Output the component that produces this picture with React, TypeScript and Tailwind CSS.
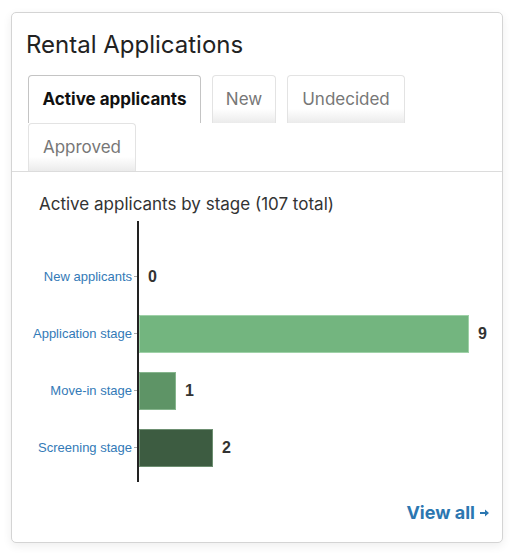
import React from "react";

type Stage = {
    label: string;
    value: number;
    barClass: string;
};

const stages: Stage[] = [
    {label: "New applicants", value: 0, barClass: "w-0"},
    {label: "Application stage", value: 9, barClass: "w-[330px] bg-[#73b57f] border-[#9fd1a8]"},
    {label: "Move-in stage", value: 1, barClass: "w-[37px] bg-[#5e9466] border-[#86b58d]"},
    {label: "Screening stage", value: 2, barClass: "w-[74px] bg-[#3d5c41] border-[#6d8f71]"},
];

const tabs = [
    {name: "Active applicants", active: true, width: "w-[173px]"},
    {name: "New", active: false, width: "w-[64px]"},
    {name: "Undecided", active: false, width: "w-[118px]"},
    {name: "Approved", active: false, width: "w-[108px]"},
];

const Tab: React.FC<{ name: string; active: boolean; width: string }> = ({name, active, width}) => {
    if (active) {
        return (
            <div className={`${width} h-[48px] flex items-center justify-center border border-b-0 border-[#c4c4c4] rounded-t-[4px] bg-white text-[17px] font-bold text-[#111]`}>
                {name}
            </div>
        );
    }
    return (
        <div className={`${width} h-[48px] flex items-center justify-center border border-b-0 border-[#e3e3e3] rounded-t-[4px] bg-gradient-to-b from-white from-[70%] to-[#ebebeb] text-[17px] text-[#777]`}>
            {name}
        </div>
    );
};

const App: React.FC = () => {
    return (
        <div className="min-h-screen bg-white pt-[12px] pl-[11px]" style={{fontFamily: "Inter, Lato, sans-serif"}}>
            <div className="w-[492px] h-[531px] border border-[#d4d4d4] rounded-[5px] bg-white shadow-[0_3px_10px_rgba(0,0,0,0.07)] flex flex-col">
                <h2 className="pl-[14px] pt-[17px] text-[24px] leading-[29px] text-[#222]">Rental Applications</h2>

                <div className="mt-[16px] pl-[16px] pr-[10px] flex flex-wrap gap-x-[11px] gap-y-[0px] border-b border-[#dcdcdc]">
                    {tabs.map((t) => (
                        <Tab key={t.name} name={t.name} active={t.active} width={t.width}/>
                    ))}
                </div>

                <div className="pl-[27px] pt-[21px] text-[17px] leading-[22px] text-[#333]">
                    Active applicants by stage (107 total)
                </div>

                <div className="mt-[6px] flex">
                    <div className="w-[125px] shrink-0 pt-[27px] pb-[6px] flex flex-col" style={{fontFamily: "'Liberation Sans', Arial, sans-serif"}}>
                        {stages.map((s) => (
                            <div key={s.label} className="h-[57px] flex items-center justify-end gap-[2px] text-[13px] text-[#337ab7]">
                                <span>{s.label}</span>
                                <span className="w-[3px] h-px bg-[#aaa]"/>
                            </div>
                        ))}
                    </div>
                    <div className="border-l-[2px] border-[#222] pt-[27px] pb-[6px] flex flex-col">
                        {stages.map((s) => (
                            <div key={s.label} className="h-[57px] flex items-center">
                                {s.value > 0 && <div className={`h-[38px] border ${s.barClass}`}/>}
                                <span className="ml-[9px] text-[16px] font-bold text-[#333]" style={{fontFamily: "'Liberation Sans', Arial, sans-serif"}}>
                                    {s.value}
                                </span>
                            </div>
                        ))}
                    </div>
                </div>

                <div className="mt-auto mb-[16px] pr-[13px] flex justify-end">
                    <a href="#" className="flex items-center gap-[5px] text-[18px] font-bold text-[#2c77b1]">
                        View all
                        <svg width="9" height="8" viewBox="0 0 9 8" fill="#2c77b1">
                            <path d="M0 3h5V0.5L9 4 5 7.5V5H0z"/>
                        </svg>
                    </a>
                </div>
            </div>
        </div>
    );
};

export default App;
